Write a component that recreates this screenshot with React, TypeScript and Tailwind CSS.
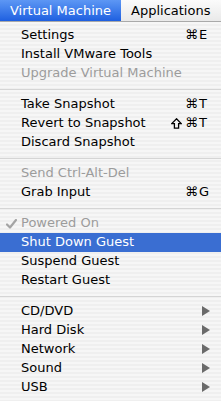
type Item =
  | { kind: 'sep' }
  | {
      kind?: 'item';
      label: string;
      shift?: boolean;
      keyChar?: string;
      disabled?: boolean;
      checked?: boolean;
      selected?: boolean;
      submenu?: boolean;
    };

const items: Item[] = [
  { label: 'Settings', keyChar: 'E' },
  { label: 'Install VMware Tools' },
  { label: 'Upgrade Virtual Machine', disabled: true },
  { kind: 'sep' },
  { label: 'Take Snapshot', keyChar: 'T' },
  { label: 'Revert to Snapshot', shift: true, keyChar: 'T' },
  { label: 'Discard Snapshot' },
  { kind: 'sep' },
  { label: 'Send Ctrl-Alt-Del', disabled: true },
  { label: 'Grab Input', keyChar: 'G' },
  { kind: 'sep' },
  { label: 'Powered On', disabled: true, checked: true },
  { label: 'Shut Down Guest', selected: true },
  { label: 'Suspend Guest' },
  { label: 'Restart Guest' },
  { kind: 'sep' },
  { label: 'CD/DVD', submenu: true },
  { label: 'Hard Disk', submenu: true },
  { label: 'Network', submenu: true },
  { label: 'Sound', submenu: true },
  { label: 'USB', submenu: true },
];

function Check() {
  return (
    <svg width="11" height="10" viewBox="0 0 11 10" className="absolute left-[6px] top-[5px]">
      <path d="M1 5.5 L4 8.5 L10 1" fill="none" stroke="#a4a4a4" strokeWidth="2.2" strokeLinecap="round" strokeLinejoin="round" />
    </svg>
  );
}

function ShiftIcon() {
  return (
    <svg width="11" height="11" viewBox="0 0 11 11" className="absolute left-[-14px] top-[4px]">
      <path d="M5.5 0.8 L10.2 5.6 L7.6 5.6 L7.6 10.2 L3.4 10.2 L3.4 5.6 L0.8 5.6 Z" fill="none" stroke="#000" strokeWidth="1.3" strokeLinejoin="miter" />
    </svg>
  );
}

function Arrow({ light }: { light?: boolean }) {
  return (
    <svg width="8" height="10" viewBox="0 0 8 10" className="absolute left-[202px] top-[4px]">
      <path d="M0 0 L8 5 L0 10 Z" fill={light ? '#fff' : '#6a6a6a'} />
    </svg>
  );
}

function MenuRow({ item }: { item: Exclude<Item, { kind: 'sep' }> }) {
  const color = item.selected ? 'text-white' : item.disabled ? 'text-[#9c9c9c]' : 'text-black';
  return (
    <div
      className={`relative h-[19px] leading-[17px] pl-[21px] ${color} ${item.selected ? 'bg-[#3a6ed2]' : ''}`}
    >
      {item.checked && <Check />}
      <span>{item.label}</span>
      {item.keyChar && (
        <div className="absolute left-[185px] top-0 flex">
          {item.shift && <ShiftIcon />}
          <span>⌘</span>
          <span className="pl-[1px]">{item.keyChar}</span>
        </div>
      )}
      {item.submenu && <Arrow light={item.selected} />}
    </div>
  );
}

export default function App() {
  return (
    <div className="w-[221px] h-[401px] overflow-hidden text-[13px] font-['DejaVu_Sans',sans-serif] bg-[repeating-linear-gradient(180deg,#efefef_0px,#efefef_2px,#f6f6f6_2px,#f6f6f6_4px)]">
      <div className="flex h-[22px] border-b border-[#a9a9a9] bg-gradient-to-b from-[#fbfbfb] to-[#e9e9e9] leading-[21px]">
        <div className="px-[10px] text-white bg-gradient-to-b from-[#5d97f4] to-[#1e5fe0]">Virtual Machine</div>
        <div className="px-[10px] text-black">Applications</div>
      </div>
      <div className="pt-[4px]">
        {items.map((item, i) =>
          item.kind === 'sep' ? (
            <div key={i} className="h-[12px] flex items-center">
              <div className="w-full h-px bg-[#d5d5d5]" />
            </div>
          ) : (
            <MenuRow key={i} item={item} />
          )
        )}
      </div>
    </div>
  );
}
